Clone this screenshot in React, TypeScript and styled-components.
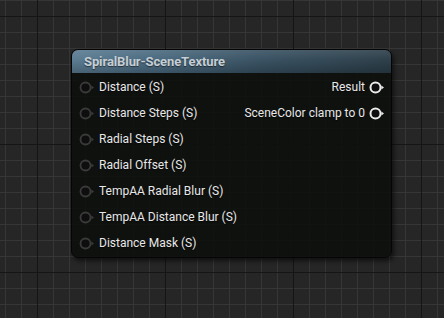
import React from "react";
import styled, { createGlobalStyle } from "styled-components";

const Global = createGlobalStyle`
  html, body { margin: 0; padding: 0; }
  body { background: #262626; font-family: Roboto, "Noto Sans", sans-serif; }
`;

const Canvas = styled.div`
  position: relative;
  width: 444px;
  height: 318px;
  overflow: hidden;
  background-color: #262626;
  background-image:
    linear-gradient(to right, #151515 0, #151515 1px, transparent 1px),
    linear-gradient(to bottom, #151515 0, #151515 1px, transparent 1px),
    linear-gradient(to right, #363636 0, #363636 1px, transparent 1px),
    linear-gradient(to bottom, #363636 0, #363636 1px, transparent 1px);
  background-size: 128px 128px, 128px 128px, 16px 16px, 16px 16px;
  background-position: 37px 0, 0 16px, 5px 0, 0 0;
`;

const Node = styled.div<{ $x: number; $y: number; $w: number }>`
  position: absolute;
  left: ${(p) => p.$x}px;
  top: ${(p) => p.$y}px;
  width: ${(p) => p.$w}px;
  box-sizing: border-box;
  border: 1px solid #050505;
  border-radius: 7px;
  background: rgba(13, 15, 13, 0.9);
  box-shadow: 2px 3px 4px rgba(0, 0, 0, 0.55);
  overflow: hidden;
`;

const Header = styled.div`
  height: 23px;
  display: flex;
  align-items: center;
  padding-left: 12px;
  background:
    linear-gradient(to bottom, rgba(255, 255, 255, 0.1) 0, rgba(255, 255, 255, 0.02) 40%, rgba(0, 0, 0, 0.2) 100%),
    linear-gradient(to right, #5a7b91 0%, #4a6a80 25%, #375061 60%, #2b3d48 100%);
  color: #c6ced4;
  font-weight: 700;
  font-size: 13px;
  letter-spacing: -0.1px;
  text-shadow: 0 1px 1px rgba(0, 0, 0, 0.5);
`;

const Body = styled.div`
  display: flex;
  justify-content: space-between;
  padding: 1px 0 1px 0;
`;

const Column = styled.div<{ $align: "start" | "end" }>`
  display: flex;
  flex-direction: column;
  align-items: ${(p) => (p.$align === "start" ? "flex-start" : "flex-end")};
`;

const PinRow = styled.div<{ $side: "in" | "out" }>`
  height: 26px;
  display: flex;
  align-items: center;
  gap: ${(p) => (p.$side === "in" ? 5 : 4)}px;
  padding: ${(p) => (p.$side === "in" ? "0 0 0 7px" : "0 7px 0 0")};
  color: #e8e8e8;
  font-size: 12px;
  text-shadow: 0 1px 1px rgba(0, 0, 0, 0.6);
`;

const PinIcon = ({ connected }: { connected: boolean }) => (
  <svg width="15" height="13" viewBox="0 0 15 13">
    <circle
      cx="6.5"
      cy="6.5"
      r="5"
      fill={connected ? "#101010" : "#0e0e0e"}
      stroke={connected ? "#ececec" : "#3a3a3a"}
      strokeWidth={connected ? 2 : 1.8}
    />
    <polygon points="12.3,4.5 15,6.5 12.3,8.5" fill={connected ? "#ececec" : "#3a3a3a"} />
  </svg>
);

const inputs = [
  "Distance (S)",
  "Distance Steps (S)",
  "Radial Steps (S)",
  "Radial Offset (S)",
  "TempAA Radial Blur (S)",
  "TempAA Distance Blur (S)",
  "Distance Mask (S)",
];

const outputs = ["Result", "SceneColor clamp to 0"];

export default function App() {
  return (
    <>
      <Global />
      <Canvas>
        <Node $x={71} $y={49} $w={321}>
          <Header>SpiralBlur-SceneTexture</Header>
          <Body>
            <Column $align="start">
              {inputs.map((name) => (
                <PinRow key={name} $side="in">
                  <PinIcon connected={false} />
                  <span>{name}</span>
                </PinRow>
              ))}
            </Column>
            <Column $align="end">
              {outputs.map((name) => (
                <PinRow key={name} $side="out">
                  <span>{name}</span>
                  <PinIcon connected={true} />
                </PinRow>
              ))}
            </Column>
          </Body>
        </Node>
      </Canvas>
    </>
  );
}
